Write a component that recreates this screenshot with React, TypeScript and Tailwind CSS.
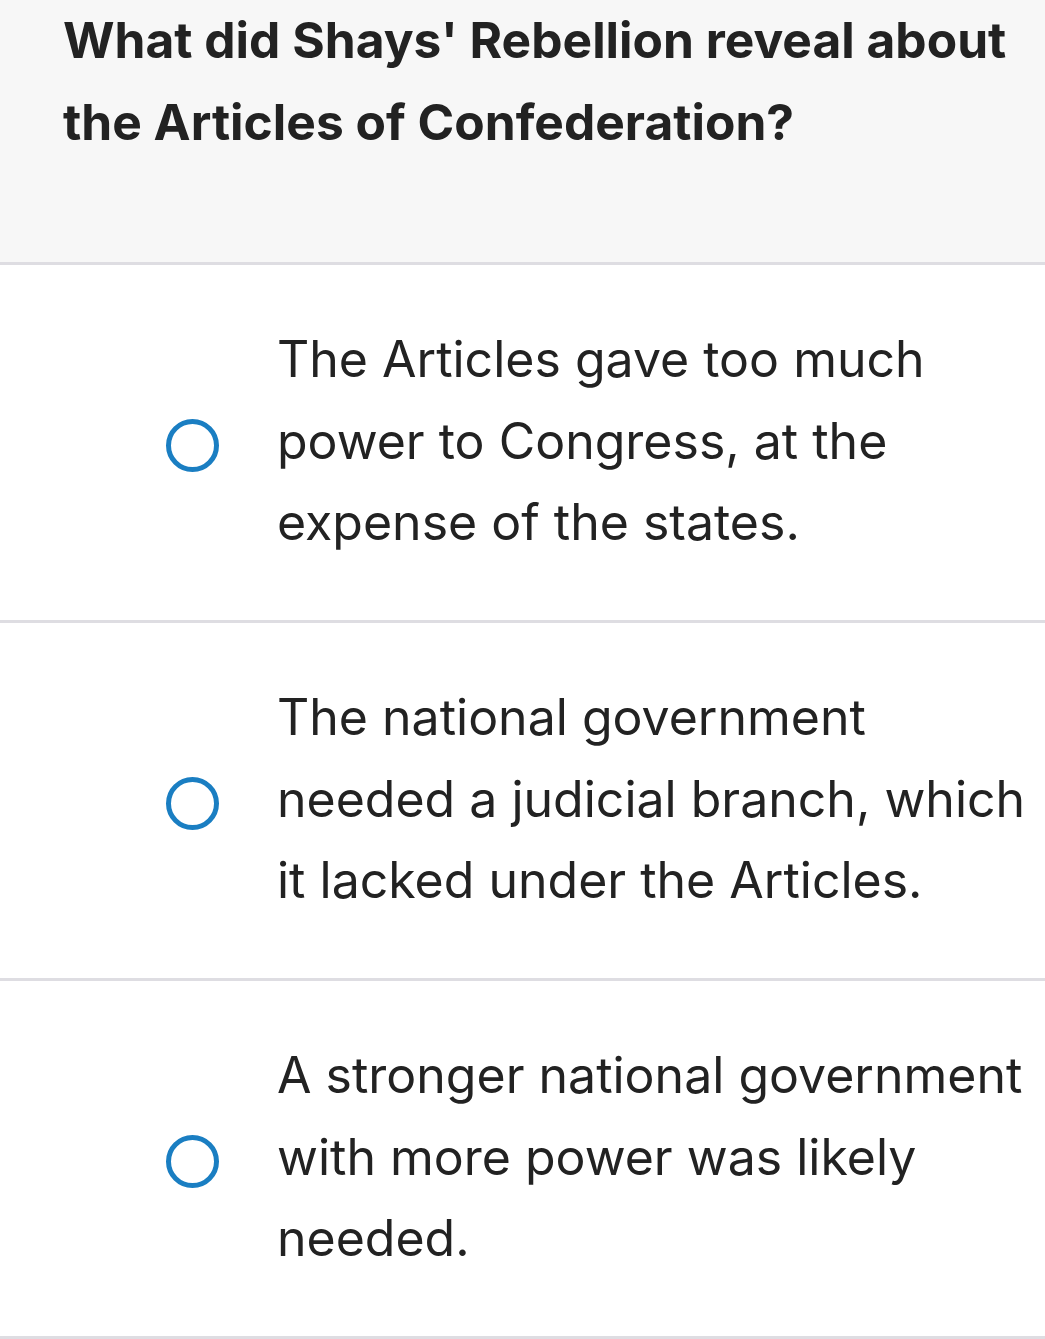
import React from "react";

const options = [
  ["The Articles gave too much", "power to Congress, at the", "expense of the states."],
  ["The national government", "needed a judicial branch, which", "it lacked under the Articles."],
  ["A stronger national government", "with more power was likely", "needed."],
];

export default function App() {
  return (
    <div className="w-[1045px] min-h-[1339px] bg-white text-[#222222]" style={{ fontFamily: "Inter, 'Liberation Sans', sans-serif" }}>
      <div className="h-[266px] bg-[#f7f7f7] border-b-[3px] border-[#dedde2] pl-[63px]">
        <h1 className="text-[49.7px] font-bold leading-[82px] whitespace-nowrap -mt-[1px]">
          What did Shays' Rebellion reveal about
          <br />
          the Articles of Confederation?
        </h1>
      </div>
      {options.map((lines, i) => (
        <div key={i} className="h-[358px] border-b-[3px] border-[#dedde2] flex items-center">
          <div className="w-[277px] pl-[166px] pt-[5px] shrink-0">
            <div className="w-[53px] h-[53px] rounded-full border-[5px] border-[#1a7ec2]" />
          </div>
          <div className="self-start mt-[54px] text-[50px] leading-[81.5px] whitespace-nowrap">
            {lines.map((l, j) => (
              <React.Fragment key={j}>
                {l}
                {j < lines.length - 1 && <br />}
              </React.Fragment>
            ))}
          </div>
        </div>
      ))}
    </div>
  );
}
